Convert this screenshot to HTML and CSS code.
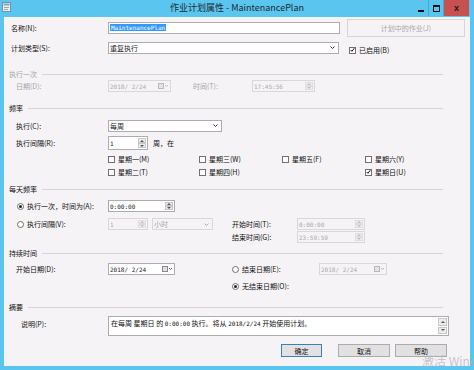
FILE: index.html
```html
<!DOCTYPE html>
<html lang="zh-CN">
<head>
  <meta charset="UTF-8" />
  <title>作业计划属性 - MaintenancePlan</title>
  <link rel="stylesheet" href="styles.css">
</head>
<body>

<div class="window">
  <!-- Barre de titre -->
  <div class="titlebar">
    <div class="tb-left">
      <svg class="app-icon" width="9" height="10" viewBox="0 0 9 10">
        <rect x="0.5" y="0.5" width="8" height="9" fill="#e8eef4" stroke="#7d8fa3"/>
        <rect x="1.5" y="1.5" width="6" height="2" fill="#8aa3bf"/>
        <rect x="2" y="5" width="5" height="1" fill="#9aa9b8"/>
        <rect x="2" y="7" width="4" height="1" fill="#9aa9b8"/>
      </svg>
    </div>
    <div class="title">作业计划属性 - MaintenancePlan</div>
    <div class="caption-btns">
      <span class="cap min"><i></i></span>
      <span class="cap max"><i></i></span>
      <span class="cap close">x</span>
    </div>
  </div>

  <div class="client">
    <div class="row row-name">
      <span class="lbl lbl-top">名称(N):</span>
      <div class="field name-field"><span class="sel">MaintenancePlan</span></div>
      <button class="btn btn-jobs" disabled>计划中的作业(J)</button>
    </div>

    <div class="row row-type">
      <span class="lbl lbl-top">计划类型(S):</span>
      <div class="field combo type-combo">
        <span class="val cjk">重复执行</span>
        <svg class="chev" width="5" height="3" viewBox="0 0 5 3"><path d="M0.5 0.5 L2.5 2.5 L4.5 0.5" fill="none" stroke="#333"/></svg>
      </div>
      <label class="check enabled-check"><span class="cb on"><svg width="6" height="6" viewBox="0 0 6 6"><path d="M0.8 3 L2.3 4.6 L5.2 0.8" fill="none" stroke="#111" stroke-width="1.2"/></svg></span>已启用(B)</label>
    </div>

    <!-- Exécution unique -->
    <div class="section muted sec-once"><span>执行一次</span><i></i></div>
    <div class="row row-date muted">
      <span class="lbl">日期(D):</span>
      <div class="field disabled date w63">
        <span class="val">2018/ 2/24</span>
        <svg class="cal" width="10" height="6" viewBox="0 0 10 6"><rect x="0.5" y="0.5" width="5" height="5" fill="#e4e4e4" stroke="#b8b8b8"/><path d="M7 2 L8.5 3.5 L10 2" fill="none" stroke="#b8b8b8"/></svg>
      </div>
      <span class="lbl lbl-time">时间(T):</span>
      <div class="field disabled spin w63">
        <span class="val">17:45:56</span>
        <span class="arrows"><b class="up"></b><b class="down"></b></span>
      </div>
    </div>

    <!-- Fréquence -->
    <div class="section sec-freq"><span>频率</span><i></i></div>
    <div class="row row-exec">
      <span class="lbl">执行(C):</span>
      <div class="field combo exec-combo">
        <span class="val cjk">每周</span>
        <svg class="chev" width="5" height="3" viewBox="0 0 5 3"><path d="M0.5 0.5 L2.5 2.5 L4.5 0.5" fill="none" stroke="#333"/></svg>
      </div>
    </div>
    <div class="row row-interval">
      <span class="lbl">执行间隔(R):</span>
      <div class="field spin tall w40">
        <span class="val">1</span>
        <span class="arrows"><b class="up"></b><b class="down"></b></span>
      </div>
      <span class="unit">周，在</span>
    </div>
    <div class="row days days-1">
      <label class="check day d1"><span class="cb"></span>星期一(M)</label>
      <label class="check day d2"><span class="cb"></span>星期三(W)</label>
      <label class="check day d3"><span class="cb"></span>星期五(F)</label>
      <label class="check day"><span class="cb"></span>星期六(Y)</label>
    </div>
    <div class="row days days-2">
      <label class="check day d1"><span class="cb"></span>星期二(T)</label>
      <label class="check day d2"><span class="cb"></span>星期四(H)</label>
      <span class="day d3"></span>
      <label class="check day"><span class="cb on"><svg width="6" height="6" viewBox="0 0 6 6"><path d="M0.8 3 L2.3 4.6 L5.2 0.8" fill="none" stroke="#111" stroke-width="1.2"/></svg></span>星期日(U)</label>
    </div>

    <!-- Fréquence journalière -->
    <div class="section sec-daily"><span>每天频率</span><i></i></div>
    <div class="row row-once">
      <label class="radio opt"><span class="rb on"></span>执行一次，时间为(A):</label>
      <div class="field spin w67">
        <span class="val">0:00:00</span>
        <span class="arrows"><b class="up"></b><b class="down"></b></span>
      </div>
    </div>
    <div class="row row-every">
      <label class="radio opt"><span class="rb"></span>执行间隔(V):</label>
      <div class="field disabled spin w40">
        <span class="val">1</span>
        <span class="arrows"><b class="up"></b><b class="down"></b></span>
      </div>
      <div class="field disabled combo hours-combo">
        <span class="val cjk">小时</span>
        <svg class="chev" width="5" height="3" viewBox="0 0 5 3"><path d="M0.5 0.5 L2.5 2.5 L4.5 0.5" fill="none" stroke="#b0b0b0"/></svg>
      </div>
      <span class="lbl lbl-range start-lbl">开始时间(T):</span>
      <div class="field disabled spin w68">
        <span class="val">0:00:00</span>
        <span class="arrows"><b class="up"></b><b class="down"></b></span>
      </div>
    </div>
    <div class="row row-end">
      <span class="lbl lbl-range">结束时间(G):</span>
      <div class="field disabled spin w68">
        <span class="val">23:59:59</span>
        <span class="arrows"><b class="up"></b><b class="down"></b></span>
      </div>
    </div>

    <!-- Durée -->
    <div class="section sec-duration"><span>持续时间</span><i></i></div>
    <div class="row row-start">
      <span class="lbl">开始日期(D):</span>
      <div class="field date w67">
        <span class="val">2018/ 2/24</span>
        <svg class="cal" width="10" height="6" viewBox="0 0 10 6"><rect x="0.5" y="0.5" width="5" height="5" fill="#e0e0e0" stroke="#8a8a8a"/><path d="M7 2 L8.5 3.5 L10 2" fill="none" stroke="#666"/></svg>
      </div>
      <label class="radio end-opt"><span class="rb"></span>结束日期(E):</label>
      <div class="field disabled date w68">
        <span class="val">2018/ 2/24</span>
        <svg class="cal" width="10" height="6" viewBox="0 0 10 6"><rect x="0.5" y="0.5" width="5" height="5" fill="#e4e4e4" stroke="#b8b8b8"/><path d="M7 2 L8.5 3.5 L10 2" fill="none" stroke="#b8b8b8"/></svg>
      </div>
    </div>
    <div class="row row-noend">
      <label class="radio"><span class="rb on"></span>无结束日期(O):</label>
    </div>

    <!-- Résumé -->
    <div class="section sec-summary"><span>摘要</span><i></i></div>
    <div class="row row-desc">
      <span class="lbl desc-lbl">说明(P):</span>
      <div class="textarea">
        <span class="desc-text">在每周 星期日 的 <span class="num">0:00:00</span> 执行。将从 <span class="num">2018/2/24</span> 开始使用计划。</span>
        <span class="vscroll"><b class="up"></b><b class="down"></b></span>
      </div>
    </div>

    <div class="row row-buttons">
      <button class="btn btn-ok">确定</button>
      <button class="btn btn-cancel">取消</button>
      <button class="btn btn-help">帮助</button>
    </div>
  </div>

  <div class="watermark">激活 Windows</div>
</div>

</body>
</html>
```

FILE: styles.css
```css
body {
  margin: 0;
  background: #fff;
  font-family: "Noto Sans CJK SC", "Noto Sans", sans-serif;
}

.window {
  position: relative;
  width: 474px;
  height: 370px;
  background: #5ac5ee;
  display: flex;
  flex-direction: column;
  overflow: hidden;
}

/* ---- barre de titre ---- */
.titlebar {
  height: 17px;
  display: grid;
  grid-template-columns: 1fr auto 1fr;
  align-items: start;
}

.tb-left {
  padding: 2px 0 0 2px;
}

.app-icon {
  display: block;
}

.title {
  font-size: 9px;
  line-height: 16px;
  color: #1e2a33;
  font-family: "Noto Sans CJK SC", "Liberation Sans", sans-serif;
}

.caption-btns {
  justify-self: end;
  display: flex;
  margin-right: 5px;
}

.cap {
  height: 16px;
  display: flex;
  align-items: center;
  justify-content: center;
  box-sizing: border-box;
}

.cap.min, .cap.max {
  width: 15px;
  background: #5ac5ee;
  border-right: 1px solid #4aa9cf;
}

.cap.min i {
  width: 6px;
  height: 2px;
  background: #111;
  margin-top: 5px;
}

.cap.max i {
  width: 5px;
  height: 4px;
  border: 1px solid #111;
  border-top-width: 2px;
}

.cap.close {
  width: 25px;
  background: #c75050;
  color: #2a1414;
  font: bold 9px "Liberation Sans", sans-serif;
}

/* ---- zone client ---- */
.client {
  flex: 1;
  margin: 0 4px 4px 4px;
  background: #f5f3f5;
  font-size: 7px;
  color: #111;
  display: flex;
  flex-direction: column;
}

.row {
  display: flex;
  align-items: center;
  white-space: nowrap;
}

.lbl {
  flex: none;
  width: 92px;
}

.lbl-top {
  width: 97px;
}

.muted, .muted .lbl {
  color: #a6a6a6;
}

/* sections */
.section {
  display: flex;
  align-items: center;
  height: 10px;
  margin-left: 5px;
  margin-right: 27px;
}

.section span {
  padding-right: 5px;
}

.section i {
  flex: 1;
  border-top: 1px solid #d6d4d6;
}

.sec-once { margin-top: 14px; }
.sec-freq { margin-top: 11px; }
.sec-daily { margin-top: 6px; }
.sec-duration { margin-top: 5px; }
.sec-summary { margin-top: 10px; }

/* champs */
.field {
  flex: none;
  box-sizing: border-box;
  height: 12px;
  border: 1px solid #abadb3;
  background: #fff;
  display: flex;
  align-items: center;
  padding-left: 1px;
  font-family: "DejaVu Sans Mono", monospace;
  font-size: 6px;
  color: #222;
}

.field .val {
  flex: 1;
}

.field .cjk {
  font-family: "Noto Sans CJK SC", sans-serif;
  font-size: 7px;
}

.field.disabled {
  border-color: #d9d7d9;
  background: #f5f3f5;
  color: #aaa;
}

.field.tall { height: 14px; }

.w40 { width: 40px; }
.w63 { width: 63px; }
.w67 { width: 67px; }
.w68 { width: 68px; }

.chev {
  margin-right: 3px;
}

.cal {
  margin-right: 2px;
}

.spin .arrows {
  align-self: stretch;
  width: 8px;
  display: flex;
  flex-direction: column;
  margin: 1px;
}

.arrows b, .vscroll b {
  flex: 1;
  box-sizing: border-box;
  border: 1px solid #c8c8c8;
  background: #ececec;
  display: flex;
  align-items: center;
  justify-content: center;
}

.arrows b::after, .vscroll b::after {
  content: "";
  border-left: 2px solid transparent;
  border-right: 2px solid transparent;
}

b.up::after {
  border-bottom: 2px solid #555;
}

b.down::after {
  border-top: 2px solid #555;
}

.disabled .arrows b {
  border-color: #dedede;
  background: #f0eef0;
}

.disabled b.up::after { border-bottom-color: #c0c0c0; }
.disabled b.down::after { border-top-color: #c0c0c0; }

.name-field {
  width: 232px;
}

.sel {
  background: #3399ff;
  color: #fff;
  padding: 0 1px;
}

.btn {
  font-family: "Noto Sans CJK SC", sans-serif;
  font-size: 7px;
  box-sizing: border-box;
  padding: 0;
  border: 1px solid #acacac;
  background: #e1e1e1;
  color: #111;
}

.btn-jobs {
  width: 118px;
  height: 18px;
  margin-left: 7px;
  background: #f5f3f5;
  border-color: #d6d6d6;
  color: #a8a8a8;
}

.row-name {
  margin-top: 1px;
  height: 19px;
  padding-left: 7px;
}

.row-type {
  margin-top: 3px;
  height: 15px;
  padding-left: 7px;
}

.type-combo { width: 231px; }
.exec-combo { width: 114px; }
.hours-combo { width: 61px; margin-left: 4px; }

/* cases et boutons radio */
.check, .radio {
  display: flex;
  align-items: center;
}

.cb, .rb {
  flex: none;
  box-sizing: border-box;
  width: 7px;
  height: 7px;
  border: 1px solid #707070;
  background: #fff;
  margin-right: 3px;
  display: flex;
  align-items: center;
  justify-content: center;
}

.rb {
  border-radius: 50%;
}

.rb.on::after {
  content: "";
  width: 3px;
  height: 3px;
  border-radius: 50%;
  background: #222;
}

.enabled-check {
  margin-left: 10px;
  margin-top: 5px;
}

.row-date {
  margin-top: 1px;
  height: 12px;
  padding-left: 12px;
}

.lbl-time {
  width: 59px;
  margin-left: 22px;
}

.row-exec {
  margin-top: 7px;
  height: 11px;
  padding-left: 12px;
}

.row-interval {
  margin-top: 5px;
  height: 14px;
  padding-left: 12px;
}

.unit {
  margin-left: 5px;
}

.days {
  height: 12px;
  padding-left: 104px;
}

.days-1 { margin-top: 3px; }
.days-2 { margin-top: 1px; }

.day.d1 { width: 91px; }
.day.d2, .day.d3 { width: 83px; }

.row-once {
  margin-top: 6px;
  height: 12px;
  padding-left: 13px;
}

.opt {
  width: 91px;
}

.row-every {
  margin-top: 6px;
  height: 12px;
  padding-left: 13px;
}

.lbl-range {
  width: 65px;
}

.start-lbl {
  margin-left: 19px;
}

.row-end {
  margin-top: 1px;
  height: 12px;
  padding-left: 228px;
}

.row-start {
  margin-top: 5px;
  height: 12px;
  padding-left: 12px;
}

.end-opt {
  width: 87px;
  margin-left: 57px;
}

.row-noend {
  margin-top: 5px;
  height: 12px;
  padding-left: 228px;
}

.row-desc {
  margin-top: 4px;
  align-items: flex-start;
  padding-left: 17px;
}

.desc-lbl {
  width: 87px;
  margin-top: 3px;
}

.textarea {
  width: 341px;
  height: 20px;
  box-sizing: border-box;
  border: 1px solid #abadb3;
  background: #fff;
  display: flex;
}

.desc-text {
  flex: 1;
  padding: 2px 0 0 2px;
  font-size: 7px;
  line-height: 9px;
}

.num {
  font-family: "DejaVu Sans Mono", monospace;
  font-size: 6px;
}

.vscroll {
  width: 9px;
  display: flex;
  flex-direction: column;
  margin: 1px;
  gap: 1px;
}

.row-buttons {
  margin-top: 8px;
  height: 13px;
  padding-left: 277px;
}

.row-buttons .btn {
  height: 13px;
  width: 52px;
}

.btn-ok {
  width: 41px !important;
  border-color: #3c7fb1;
}

.btn-cancel {
  margin-left: 16px;
}

.btn-help {
  margin-left: 5px;
}

.watermark {
  position: absolute;
  left: 422px;
  top: 352px;
  font-size: 12px;
  color: rgba(175, 175, 185, 0.7);
  white-space: nowrap;
}
```
